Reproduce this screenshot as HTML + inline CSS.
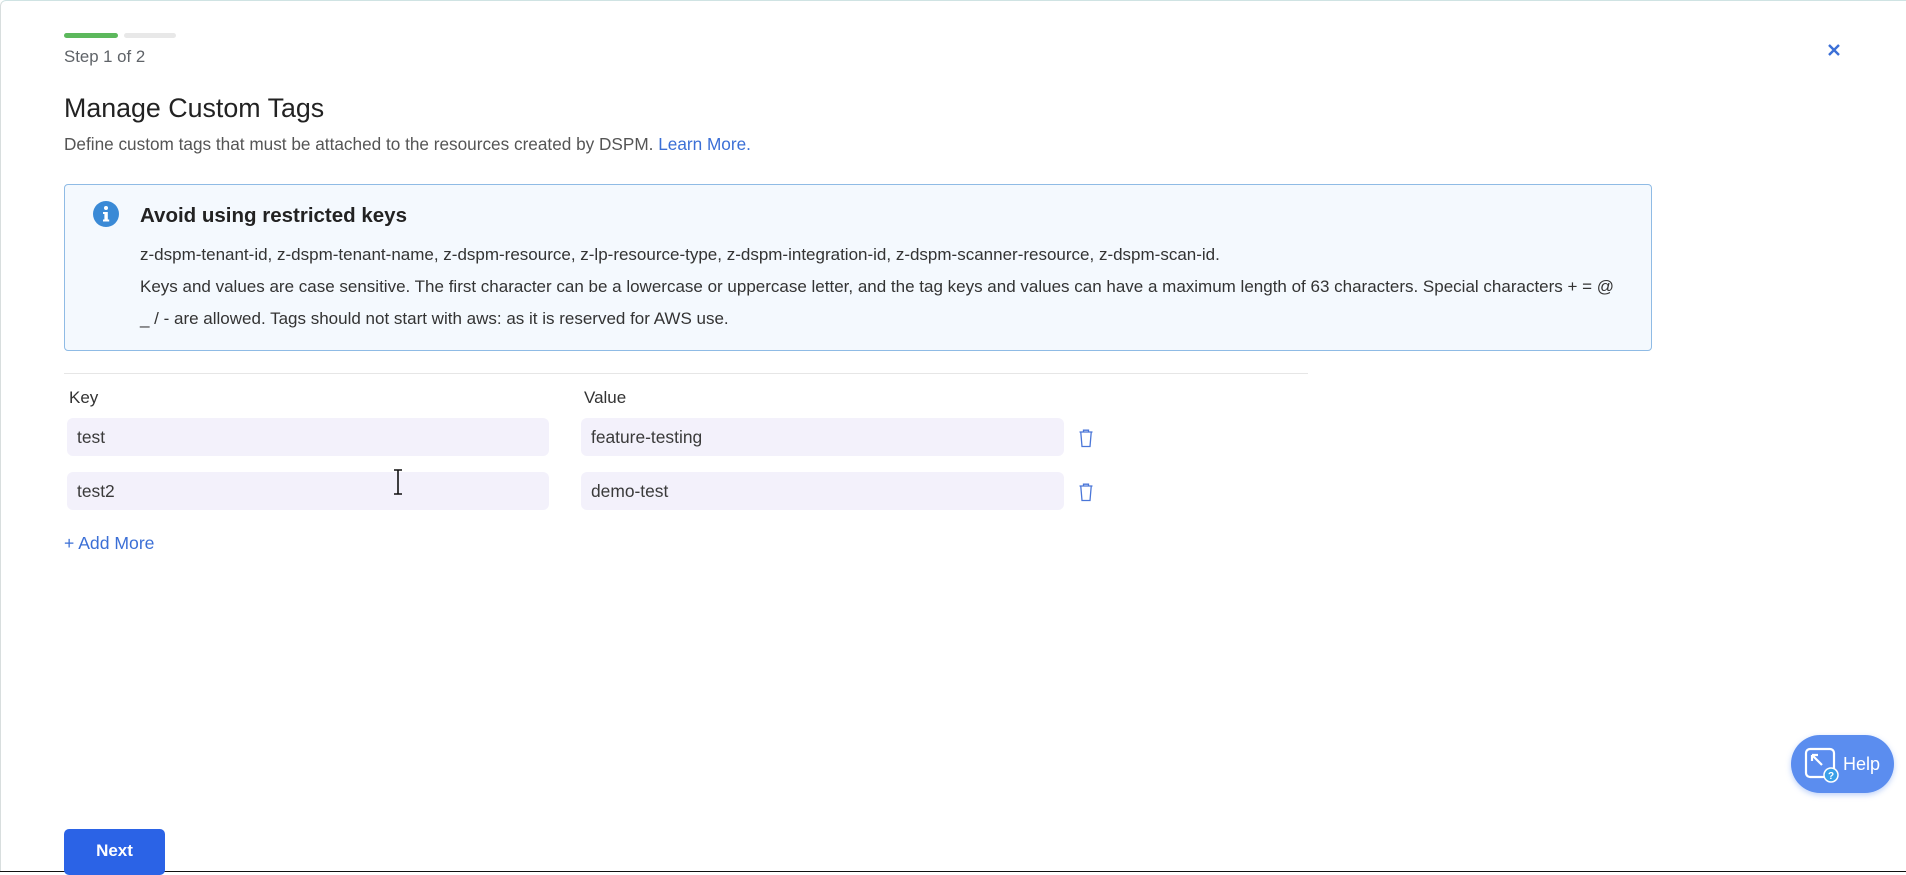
<!DOCTYPE html>
<html><head><meta charset="utf-8">
<style>
*{margin:0;padding:0;box-sizing:border-box}
html,body{width:1906px;height:872px;overflow:hidden;background:#fff;font-family:"Liberation Sans",sans-serif;color:#333}
.abs{position:absolute}
.bar{height:5px;border-radius:3px;top:33px}
.inp{position:absolute;background:#f3f1fb;border-radius:6px;height:38px;font-size:17.4px;color:#3a3a3a;line-height:38px;padding-left:10px}
</style></head><body>
<div class="abs" style="left:0;top:0;width:1906px;height:871px;border-top:1px solid #cfe3e3;border-left:1px solid #d8dede;border-radius:6px 0 0 0"></div>
<div class="abs" style="left:0;top:871px;width:1906px;height:1px;background:#111"></div>
<div class="abs bar" style="left:64px;width:54px;background:#5cb85c"></div>
<div class="abs bar" style="left:124px;width:52px;background:#e8e8e8"></div>
<div class="abs" style="left:64px;top:47px;font-size:16.8px;color:#5f6368">Step 1 of 2</div>
<div class="abs" style="left:64px;top:93px;font-size:26.8px;color:#222">Manage Custom Tags</div>
<div class="abs" style="left:64px;top:134px;font-size:17.2px;color:#555;white-space:nowrap">Define custom tags that must be attached to the resources created by DSPM. <span style="color:#3b6fd6">Learn More.</span></div>
<svg class="abs" style="left:1827px;top:43px" width="14" height="14" viewBox="0 0 14 14"><path d="M2 2L12 12M12 2L2 12" stroke="#3b6fd6" stroke-width="2.4"/></svg>

<div class="abs" style="left:64px;top:184px;width:1588px;height:167px;background:#f4f9fe;border:1px solid #8fbbe5;border-radius:4px"></div>
<svg class="abs" style="left:92px;top:200px" width="28" height="28" viewBox="0 0 28 28"><circle cx="14" cy="14" r="13" fill="#3a8ad6"/><rect x="12.4" y="12" width="3.4" height="9" fill="#fff"/><rect x="11" y="12" width="4" height="2" fill="#fff"/><rect x="11" y="19.5" width="6.2" height="2" fill="#fff"/><circle cx="14" cy="8" r="2" fill="#fff"/></svg>
<div class="abs" style="left:140px;top:204px;font-size:20.5px;font-weight:bold;color:#222">Avoid using restricted keys</div>
<div class="abs" style="left:140px;top:239px;font-size:17px;line-height:32px;color:#333;white-space:nowrap">z-dspm-tenant-id, z-dspm-tenant-name, z-dspm-resource, z-lp-resource-type, z-dspm-integration-id, z-dspm-scanner-resource, z-dspm-scan-id.<br>Keys and values are case sensitive. The first character can be a lowercase or uppercase letter, and the tag keys and values can have a maximum length of 63 characters. Special characters + = @<br>_ / - are allowed. Tags should not start with aws: as it is reserved for AWS use.</div>

<div class="abs" style="left:64px;top:373px;width:1244px;height:1px;background:#e6e6e6"></div>
<div class="abs" style="left:69px;top:388px;font-size:17px;color:#333">Key</div>
<div class="abs" style="left:584px;top:388px;font-size:17px;color:#333">Value</div>
<div class="inp" style="left:67px;top:418px;width:482px">test</div>
<div class="inp" style="left:581px;top:418px;width:483px">feature-testing</div>
<div class="inp" style="left:67px;top:472px;width:482px">test2</div>
<div class="inp" style="left:581px;top:472px;width:483px">demo-test</div>
<svg class="abs" style="left:1077px;top:428px" width="18" height="20" viewBox="0 0 18 20"><path d="M2.5 4H15.5M6.5 4V2.2H11.5V4M3.8 4.5L5 18.5H13L14.2 4.5" fill="none" stroke="#4a76d8" stroke-width="1.3"/></svg>
<svg class="abs" style="left:1077px;top:482px" width="18" height="20" viewBox="0 0 18 20"><path d="M2.5 4H15.5M6.5 4V2.2H11.5V4M3.8 4.5L5 18.5H13L14.2 4.5" fill="none" stroke="#4a76d8" stroke-width="1.3"/></svg>
<svg class="abs" style="left:391px;top:469px" width="14" height="26" viewBox="0 0 14 26"><path d="M3 1H11M7 1V25M3 25H11" stroke="#111" stroke-width="1.6"/></svg>
<div class="abs" style="left:64px;top:533px;font-size:17.6px;color:#3b6fd6">+ Add More</div>

<div class="abs" style="left:64px;top:829px;width:101px;height:46px;background:#2b63e6;border-radius:5px;color:#fff;font-weight:bold;font-size:17px;text-align:center;line-height:44px">Next</div>

<div class="abs" style="left:1791px;top:735px;width:103px;height:58px;background:#5b8def;border-radius:29px;box-shadow:0 2px 6px rgba(91,141,239,.4)"></div>
<svg class="abs" style="left:1804px;top:747px" width="40" height="36" viewBox="0 0 40 36"><rect x="2" y="2" width="28" height="28" rx="4" fill="none" stroke="#fff" stroke-width="2.2"/><path d="M8 8L18 18M8 8H14M8 8V14" stroke="#fff" stroke-width="2.2" fill="none"/><circle cx="27" cy="28" r="7" fill="#3aa0e8" stroke="#fff" stroke-width="1.5"/><text x="27" y="32" font-size="10" font-weight="bold" fill="#fff" text-anchor="middle" font-family="Liberation Sans">?</text></svg>
<div class="abs" style="left:1843px;top:754px;font-size:18px;color:#fff">Help</div>
</body></html>
